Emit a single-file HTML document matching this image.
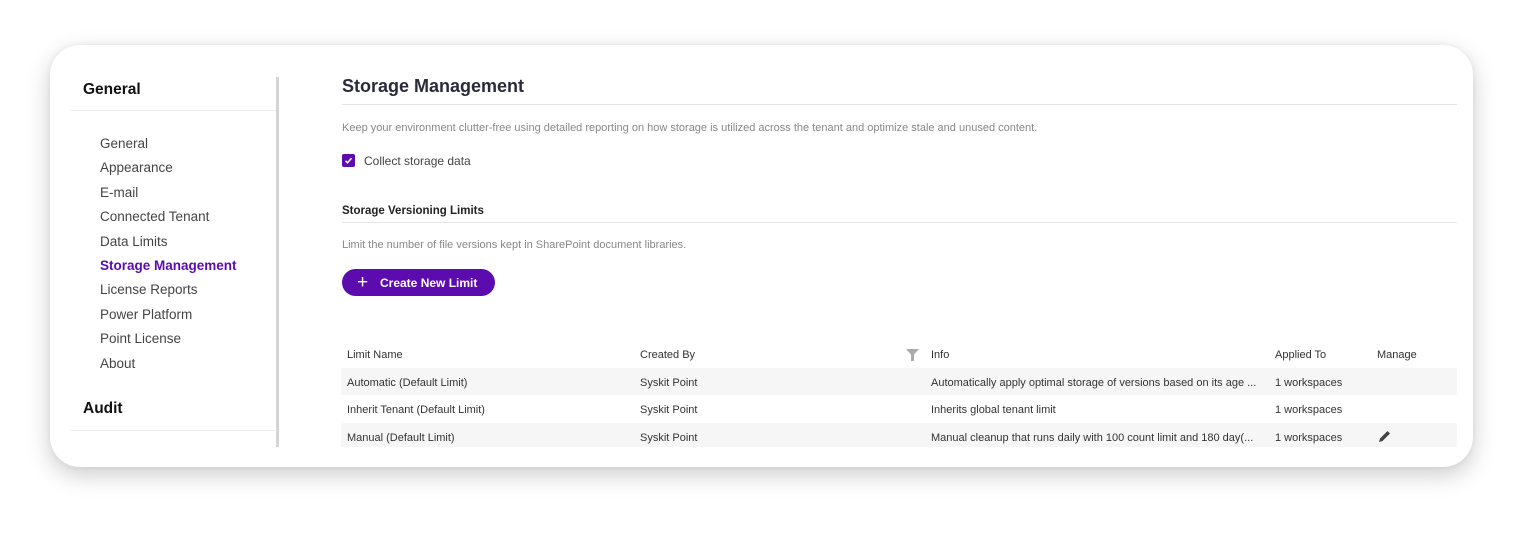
<!DOCTYPE html>
<html><head><style>
body{margin:0;width:1536px;height:536px;background:#fff;font-family:"Liberation Sans",sans-serif;position:relative;overflow:hidden}
.card{position:absolute;left:50px;top:45px;width:1423px;height:422px;border-radius:30px;background:#fff;box-shadow:0 8px 24px rgba(0,0,0,.2),0 0 6px rgba(0,0,0,.06);overflow:hidden}
.a{position:absolute;white-space:nowrap}
.nav{font-size:13.5px;color:#444;left:100px}
.h{font-weight:bold;font-size:15.5px;color:#111;left:83px}
.line{position:absolute;height:1px;background:#e3e3e3}
.t{font-size:11px;color:#333}
.row{position:absolute;left:341px;width:1116px;background:#f6f6f6}
.s{position:absolute;left:0;top:1px;width:1536px;height:536px}
</style></head><body>
<div class="card"></div>
<div class="line" style="left:70px;top:110px;width:207px;background:#eee"></div>
<div style="position:absolute;left:276px;top:77px;width:3px;height:370px;background:#d4d4d8"></div>
<div class="line" style="left:70px;top:430px;width:207px;background:#eee"></div>
<div class="line" style="left:342px;top:104px;width:1115px"></div>
<div class="line" style="left:342px;top:222px;width:1115px"></div>
<div class="row" style="top:368px;height:27px"></div>
<div class="row" style="top:423px;height:24px"></div>
<div class="s">
<div class="a h" style="top:80px">General</div>
<div class="a nav" style="top:135px">General</div>
<div class="a nav" style="top:159px">Appearance</div>
<div class="a nav" style="top:184px">E-mail</div>
<div class="a nav" style="top:208px">Connected Tenant</div>
<div class="a nav" style="top:233px">Data Limits</div>
<div class="a nav" style="top:257px;color:#5b0bb0;font-weight:bold">Storage Management</div>
<div class="a nav" style="top:281px">License Reports</div>
<div class="a nav" style="top:306px">Power Platform</div>
<div class="a nav" style="top:330px">Point License</div>
<div class="a nav" style="top:355px">About</div>
<div class="a h" style="top:399px">Audit</div>

<div class="a" style="left:342px;top:75px;font-size:18px;color:#2a2a3a;font-weight:600">Storage Management</div>
<div class="a" style="left:342px;top:121px;font-size:11px;color:#888">Keep your environment clutter-free using detailed reporting on how storage is utilized across the tenant and optimize stale and unused content.</div>
<div class="a" style="left:342px;top:153px;width:13px;height:13px;background:#5b0bb0;border-radius:2px"><svg width="13" height="13"><path d="M3.5 6.8l2 2 4-4.5" stroke="#fff" stroke-width="1.5" fill="none"/></svg></div>
<div class="a" style="left:364px;top:153px;font-size:12px;color:#444">Collect storage data</div>
<div class="a" style="left:342px;top:204px;font-size:11.5px;font-weight:bold;color:#222">Storage Versioning Limits</div>
<div class="a" style="left:342px;top:238px;font-size:11px;color:#888">Limit the number of file versions kept in SharePoint document libraries.</div>
</div>
<div class="a" style="left:342px;top:269px;width:153px;height:27px;border-radius:14px;background:#5b0bae;color:#fff;font-size:12px;font-weight:bold;line-height:29px"><span style="position:absolute;left:15px;top:-1px;font-size:19px;font-weight:normal">+</span><span style="position:absolute;left:38px">Create New Limit</span></div>
<div class="s">
<div class="a t" style="left:347px;top:348px">Limit Name</div>
<div class="a t" style="left:640px;top:348px">Created By</div>
<div class="a t" style="left:931px;top:348px">Info</div>
<div class="a t" style="left:1275px;top:348px">Applied To</div>
<div class="a t" style="left:1377px;top:348px">Manage</div>
<div class="a t" style="left:347px;top:376px">Automatic (Default Limit)</div>
<div class="a t" style="left:640px;top:376px">Syskit Point</div>
<div class="a t" style="left:931px;top:376px">Automatically apply optimal storage of versions based on its age ...</div>
<div class="a t" style="left:1275px;top:376px">1 workspaces</div>
<div class="a t" style="left:347px;top:403px">Inherit Tenant (Default Limit)</div>
<div class="a t" style="left:640px;top:403px">Syskit Point</div>
<div class="a t" style="left:931px;top:403px">Inherits global tenant limit</div>
<div class="a t" style="left:1275px;top:403px">1 workspaces</div>
<div class="a t" style="left:347px;top:431px">Manual (Default Limit)</div>
<div class="a t" style="left:640px;top:431px">Syskit Point</div>
<div class="a t" style="left:931px;top:431px">Manual cleanup that runs daily with 100 count limit and 180 day(...</div>
<div class="a t" style="left:1275px;top:431px">1 workspaces</div>
</div>
<svg class="a" style="left:906px;top:349px" width="13" height="12"><path d="M0 0h13L8 5.5V12H5V5.5z" fill="#aaa"/></svg>
<svg class="a" style="left:1378px;top:430px" width="13" height="13"><path d="M1 12l1-3.5L9.5 1 12 3.5 4.5 11z" fill="#444"/></svg>
</body></html>
